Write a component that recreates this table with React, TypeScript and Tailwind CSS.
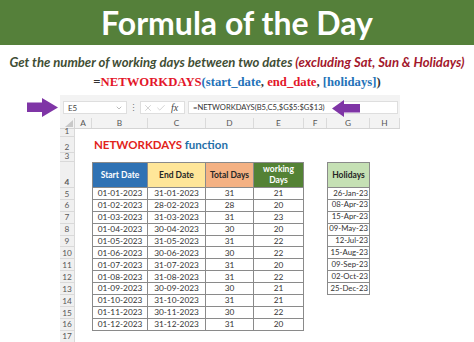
import React from "react";
import { X, Check, ChevronDown } from "lucide-react";

const data = [
  ["01-01-2023", "31-01-2023", "31", "21"],
  ["01-02-2023", "28-02-2023", "28", "20"],
  ["01-03-2023", "31-03-2023", "31", "23"],
  ["01-04-2023", "30-04-2023", "30", "20"],
  ["01-05-2023", "31-05-2023", "31", "22"],
  ["01-06-2023", "30-06-2023", "30", "22"],
  ["01-07-2023", "31-07-2023", "31", "20"],
  ["01-08-2023", "31-08-2023", "31", "22"],
  ["01-09-2023", "30-09-2023", "30", "21"],
  ["01-10-2023", "31-10-2023", "31", "21"],
  ["01-11-2023", "30-11-2023", "30", "22"],
  ["01-12-2023", "31-12-2023", "31", "20"],
];
const hol = ["26-Jan-23", "08-Apr-23", "15-Apr-23", "09-May-23", "12-Jul-23", "15-Aug-23", "09-Sep-23", "02-Oct-23", "25-Dec-23"];

function RowHdr({ label }: { label: string }) {
  return (
    <div className="w-[15px] shrink-0 bg-[#f0f0f0] border-r border-b border-[#d9d9d9] flex items-end justify-center text-[8.3px] text-[#595959] leading-none pb-[1px]">
      {label}
    </div>
  );
}

const cellB = "border-[#8a8a8a]";

export default function App() {
  return (
    <div className="w-[474px] h-[342px] overflow-hidden bg-white relative font-['Lato',sans-serif]">
      <div className="h-[45px] bg-[#55803a] flex items-center justify-center text-white font-bold text-[32px] leading-none pt-[1px]">
        Formula of the Day
      </div>
      <div className="mt-[11px] h-[13px] leading-[13px] text-center text-[13.1px] font-bold italic whitespace-nowrap">
        <span className="text-[#3f4e34]">Get the number of working days between two dates </span>
        <span className="text-[#a3182c]"> (excluding Sat, Sun &amp; Holidays)</span>
      </div>
      <div className="mt-[7px] h-[13px] leading-[13px] text-center text-[12.7px] font-bold whitespace-nowrap font-['Liberation_Serif',serif]">
        <span className="text-[#333]">=</span>
        <span className="text-[#e3162a]">NETWORKDAYS</span>
        <span className="text-[#2472b8]">(start_date</span>
        <span className="text-[#333]">, </span>
        <span className="text-[#e3162a]">end_date</span>
        <span className="text-[#333]">, </span>
        <span className="text-[#2472b8]">[holidays]</span>
        <span className="text-[#333]">)</span>
      </div>

      <div className="mt-[6px] ml-[60px] w-[340px]">
        {/* formula bar */}
        <div className="h-[23px] bg-[#f3f3f3] flex items-start pt-[6px] pl-[3px] pr-[2px]">
          <div className="w-[64px] h-[13px] bg-white border border-[#dedede] flex items-center justify-between pl-[4px] pr-[3px] text-[8px] text-[#444] leading-none">
            <span>E5</span>
            <ChevronDown size={8} strokeWidth={1.5} color="#777" />
          </div>
          <div className="w-[13px] h-[13px] flex items-center justify-center text-[9px] text-[#777] leading-none">⋮</div>
          <div className="w-[45px] h-[13px] bg-white border border-[#dedede] flex items-center pl-[2px] gap-[3px]">
            <X size={10} strokeWidth={1} color="#9a9a9a" />
            <Check size={10} strokeWidth={1} color="#9a9a9a" />
            <span className="font-['Liberation_Serif',serif] italic text-[10px] text-[#444] leading-none ml-[2px]">fx</span>
          </div>
          <div className="ml-[3px] flex-1 h-[13px] bg-white border border-[#dedede] flex items-center pl-[4px] text-[7.6px] text-[#333] leading-none whitespace-nowrap">
            =NETWORKDAYS(B5,C5,$G$5:$G$13)
          </div>
        </div>
        {/* column headers */}
        <div className="h-[11px] flex bg-[#f3f3f3] border-b border-[#d4d4d4] text-[8.3px] text-[#555] leading-none">
          <div className="w-[15px] border-r border-[#d4d4d4] relative">
            <svg width="8" height="7" className="absolute right-[1px] bottom-[1px]">
              <polygon points="8,0 8,7 0,7" fill="#c8c8c8" />
            </svg>
          </div>
          {[
            ["A", "w-[17px]"],
            ["B", "w-[56px]"],
            ["C", "w-[58px]"],
            ["D", "w-[48px]"],
            ["E", "w-[50px]"],
            ["F", "w-[23px]"],
            ["G", "w-[43px]"],
            ["H", "w-[30px]"],
          ].map(([l, w]) => (
            <div key={l} className={`${w} border-r border-[#dadada] flex items-center justify-center`}>
              {l}
            </div>
          ))}
        </div>
        {/* row 1 */}
        <div className="h-[8px] flex">
          <RowHdr label="1" />
        </div>
        {/* row 2 */}
        <div className="h-[16px] flex">
          <RowHdr label="2" />
          <div className="w-[17px]" />
          <div className="pl-[2px] flex items-center whitespace-nowrap text-[11.5px] font-bold leading-none">
            <span className="text-[#e2231a]">NETWORKDAYS</span>
            <span className="text-[#1f6fa8]">&nbsp;function</span>
          </div>
        </div>
        {/* row 3 */}
        <div className="h-[9px] flex">
          <RowHdr label="3" />
        </div>
        {/* row 4 header */}
        <div className="h-[26px] flex text-[8.5px] font-bold leading-[11px] whitespace-nowrap">
          <RowHdr label="4" />
          <div className="w-[17px]" />
          <div className={`w-[56px] border ${cellB} bg-[#2f72b4] text-white flex items-center justify-center`}>Start Date</div>
          <div className={`w-[58px] border-t border-r border-b ${cellB} bg-[#ffe699] text-[#262626] flex items-center justify-center`}>End Date</div>
          <div className={`w-[48px] border-t border-r border-b ${cellB} bg-[#f4b183] text-[#262626] flex items-center justify-center`}>Total Days</div>
          <div className={`w-[50px] border-t border-r border-b ${cellB} bg-[#548235] text-white flex flex-col items-center justify-center text-center`}>
            <span>working</span>
            <span>Days</span>
          </div>
          <div className="w-[23px]" />
          <div className={`w-[43px] border ${cellB} bg-[#c5e0b4] text-[#262626] flex items-center justify-center`}>Holidays</div>
        </div>
        {/* data rows */}
        {data.map((r, i) => (
          <div key={i} className="h-[11.9px] flex text-[8.3px] text-[#333] leading-none whitespace-nowrap">
            <RowHdr label={String(5 + i)} />
            <div className="w-[17px]" />
            <div className={`w-[56px] border-l border-r border-b ${cellB} flex items-center justify-center`}>{r[0]}</div>
            <div className={`w-[58px] border-r border-b ${cellB} flex items-center justify-center`}>{r[1]}</div>
            <div className={`w-[48px] border-r border-b ${cellB} flex items-center justify-center`}>{r[2]}</div>
            <div className={`w-[50px] border-r border-b ${cellB} flex items-center justify-center`}>{r[3]}</div>
            <div className="w-[23px]" />
            {i < hol.length ? (
              <div className={`w-[43px] border-l border-r border-b ${cellB} flex items-center justify-end pr-[1px] text-[7.8px]`}>{hol[i]}</div>
            ) : (
              <div className="w-[43px]" />
            )}
          </div>
        ))}
        <div className="h-[11.9px] flex">
          <RowHdr label="17" />
        </div>
      </div>

      {/* annotation arrows */}
      <svg className="absolute left-[27px] top-[98px]" width="31" height="19" viewBox="0 0 31 19">
        <polygon points="0,4.5 15,4.5 15,0 31,9.5 15,19 15,14 0,14" fill="#7f35a6" />
      </svg>
      <svg className="absolute left-[332px] top-[100px]" width="28" height="17" viewBox="0 0 28 17">
        <polygon points="0,8.5 12,0 12,4 28,4 28,12.5 12,12.5 12,17" fill="#7f35a6" />
      </svg>
    </div>
  );
}
